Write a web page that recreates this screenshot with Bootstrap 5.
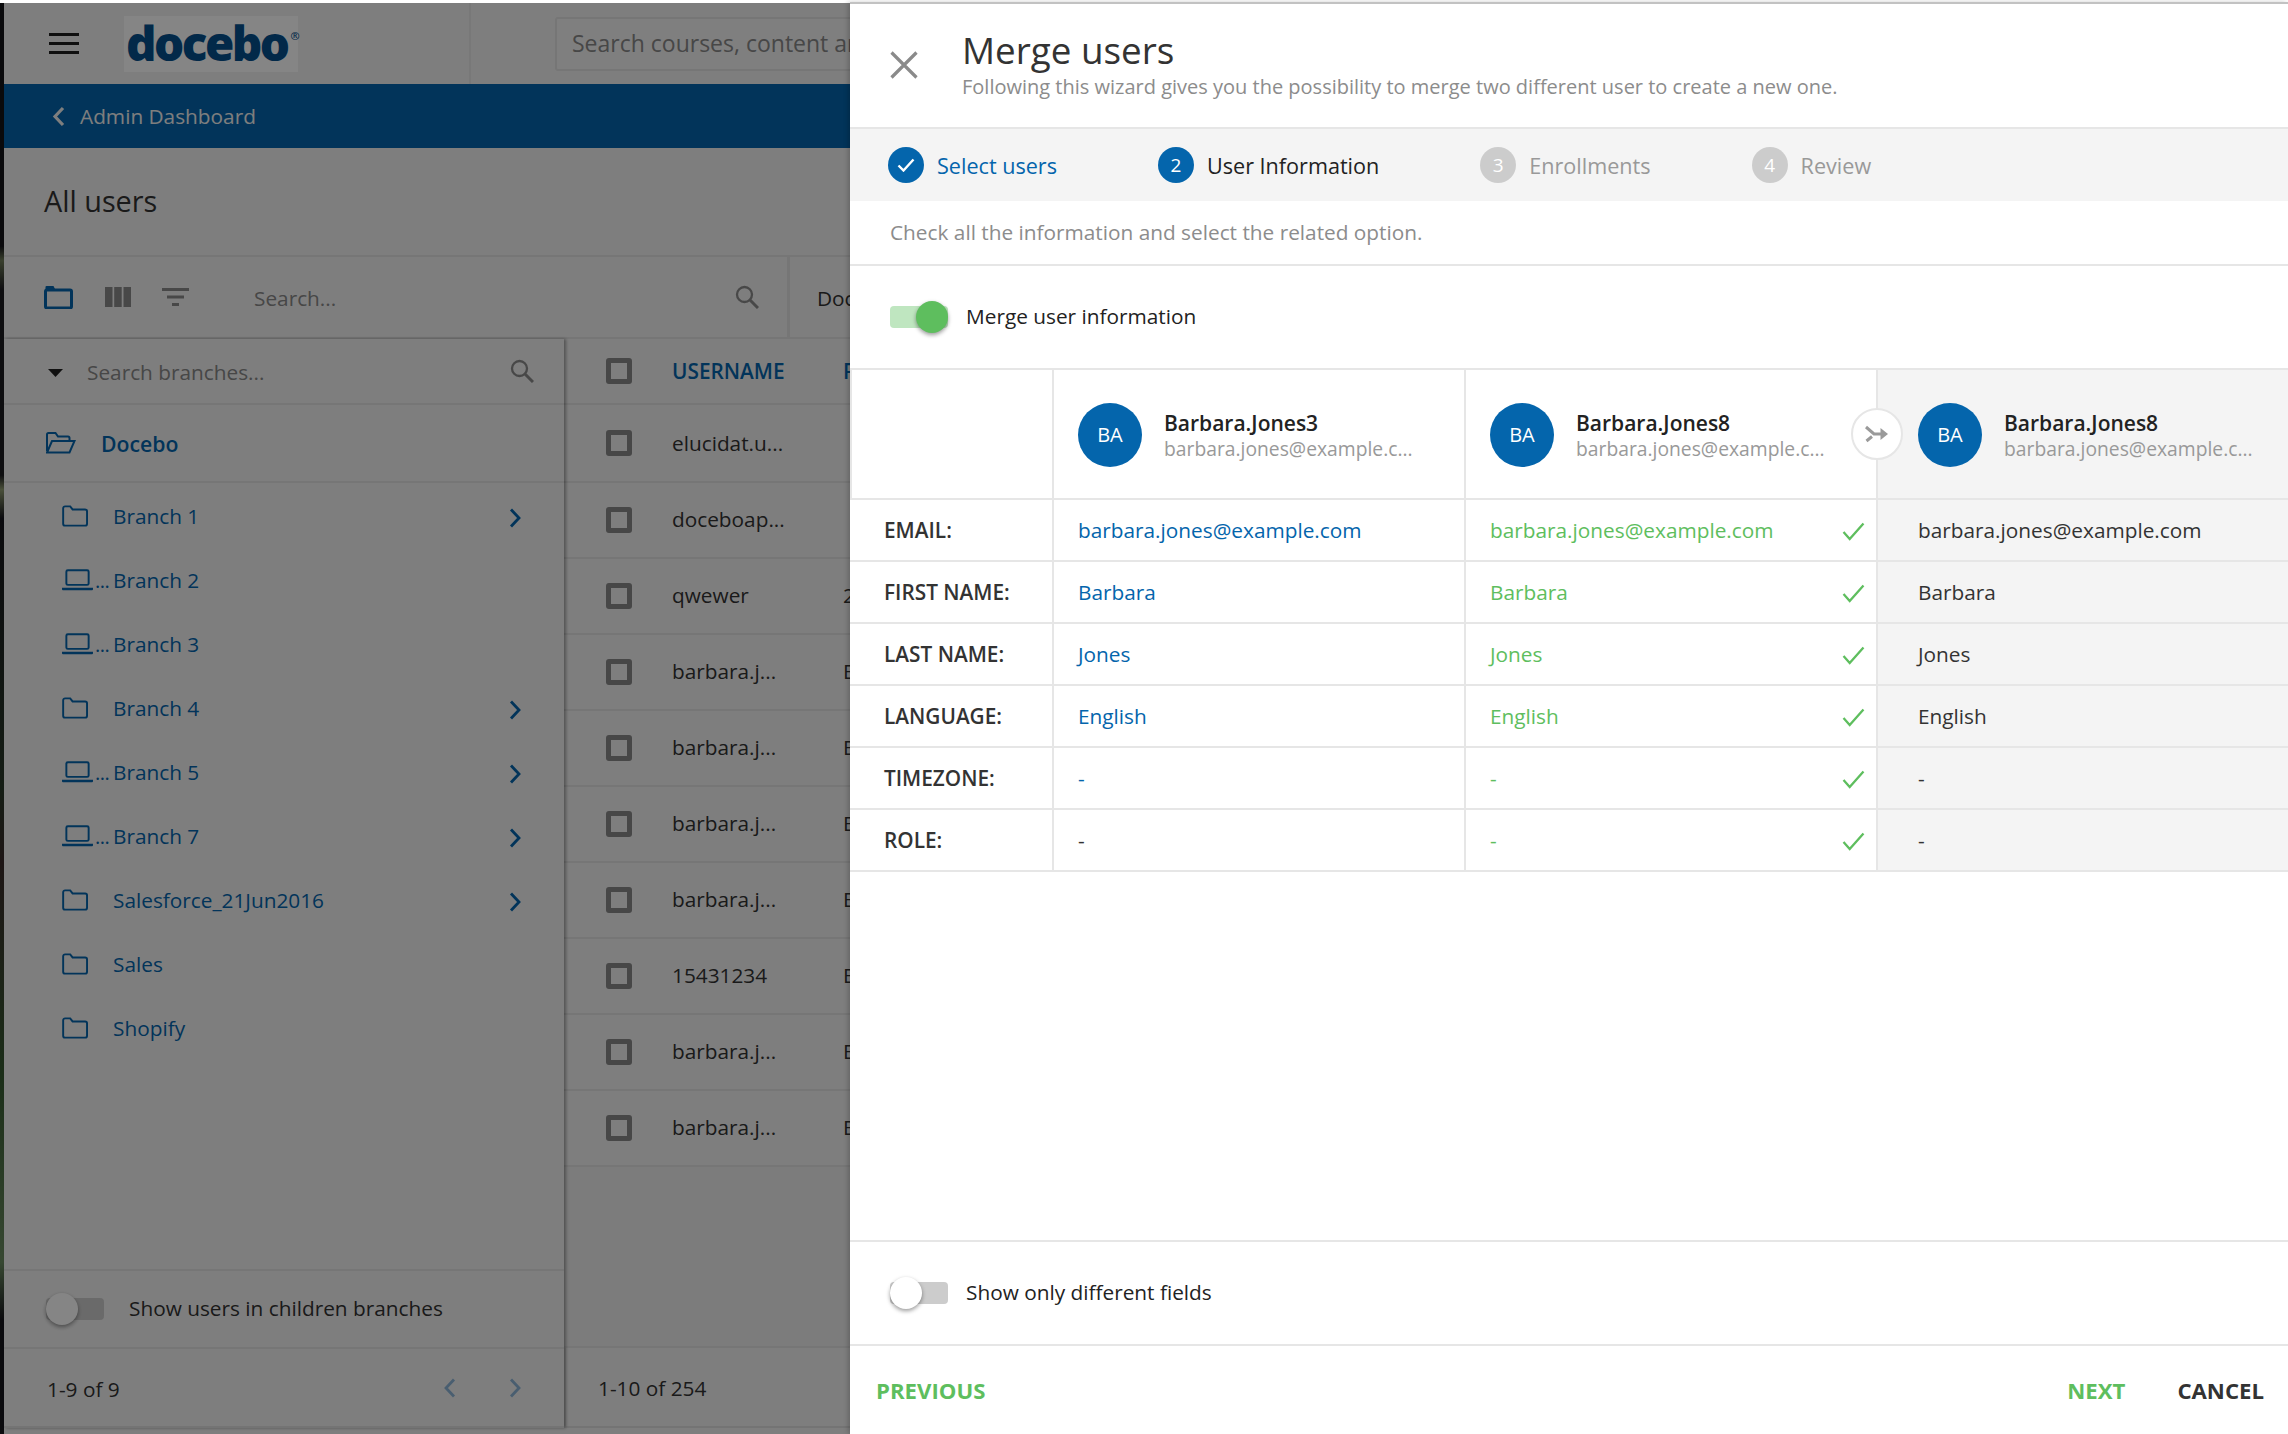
<!DOCTYPE html>
<html lang="en">
<head>
<meta charset="utf-8">
<title>Merge users</title>
<link href="https://cdn.jsdelivr.net/npm/bootstrap@5.3.0/dist/css/bootstrap.min.css" rel="stylesheet">
<style>
html,body{margin:0;height:100%;overflow:hidden}
body{width:2288px;height:1434px;background:#16161c;font-family:"Open Sans","Liberation Sans",sans-serif;font-size:20.8px;color:#333;line-height:1.3}
.strip-top{height:3px;background:#fff}
.stage{height:1431px}
.strip-left{width:4px;flex:none;background:linear-gradient(180deg,#141418 0,#141418 17%,#6e7a58 18%,#1c1c20 20%,#1c1c20 33%,#8e9a70 34%,#16161c 36%,#2a3a2a 55%,#3a2a2a 60%,#355a30 75%,#6a8a60 88%,#16161c 92%)}
.app{flex:1;background:#f2f2f2;min-width:0}
.app-head{height:81px;background:#f2f2f2}
.burger{width:84px;padding-left:45px}
.logo-box{width:174px;height:56px;background:#fff;margin-left:36px;font-weight:800;font-size:47.500px;letter-spacing:-2.500px;line-height:54px;padding-left:2px;white-space:nowrap;color:#05508d}
.logo-box sup{font-size:11px;letter-spacing:0;font-weight:600;top:-1.9em;margin-left:3px}
.head-div{width:2px;height:81px;background:#e6e6e6;margin-left:171px}
.head-search{width:600px;height:54px;margin-left:84px;border:2px solid #e2e2e2;border-radius:3px;padding-left:15px;color:#888;font-size:23px;background:#f4f4f4;white-space:nowrap;overflow:hidden}
.blue-bar{height:64px;background:#0465ac;color:#f2f2f2;padding-left:48px;gap:15px;font-size:20.800px}
.blue-bar span{padding-top:2px}
.title-bar{height:109px;border-bottom:2px solid #e2e2e2;padding-left:40px;font-size:28.800px;color:#333;padding-bottom:2px}
.tool-bar{height:82px;border-bottom:2px solid #e2e2e2}
.tool-left{width:786px;border-right:3px solid #e2e2e2;height:100%;padding-left:40px;padding-right:28px}
.tb-col{margin-left:32px}
.tb-filter{margin-left:31px}
.tool-search{color:#888;margin-left:65px;padding-top:3px}
.tool-doc{margin-left:27px;padding-top:3px}
.main-body{height:1089px}
.side{width:560px;flex:none;box-shadow:2px 0 3px rgba(0,0,0,.35);z-index:1;position:relative}
.side-search{height:66px;border-bottom:2px solid #e2e2e2;padding:0 30px 0 44px;color:#888}
.side-search span{margin-left:24px;padding-top:4px}
.side-caret{margin-top:4px}
.side-root{height:78px;border-bottom:2px solid #e2e2e2;padding-left:42px;color:#0465ac;font-weight:600;font-size:21.200px;gap:25px}
.side-root span{padding-top:2px}
.branches{flex:1;padding-top:2px}
.branch{height:64px;color:#0465ac;padding-left:58px;padding-right:43px}
.branch-icon{width:51px;flex:none;color:#0465ac;font-size:20px;letter-spacing:-.5px;margin-bottom:3px;line-height:1}
.branch-icon span{margin-left:2px}
.branch-arrow{color:#0465ac;margin-top:2px}
.side-switch{height:80px;border-top:2px solid #e2e2e2;border-bottom:2px solid #e2e2e2;padding-left:42px;gap:25px}
.side-pager{height:79px;padding:0 43px 0 43px;border-bottom:2px solid #dedede}
.side-pager>span{padding-top:5px}
.pg-arrow{color:#8db4d6}
.pg-next{margin-left:53px}
.tbl{flex:1;background:#ededed;min-width:0;overflow:hidden}
.tbl-head{height:66px;background:#f2f2f2;border-bottom:2px solid #e2e2e2;padding-left:42px;color:#0465ac;font-weight:600}
.tbl-head span{padding-top:2px}
.tbl-row{height:76px;background:#f2f2f2;border-bottom:2px solid #e2e2e2;padding-left:42px;white-space:nowrap}
.tbl-row-top{height:77.500px}
.tbl-row span{padding-top:1px}
.tbl-name{width:171px;flex:none;margin-left:40px}
.chk{width:26px;height:26px;border:5px solid #888;border-radius:3px;flex:none;background:transparent}
.tbl-fill{flex:1}
.tbl-foot{height:82px;border-top:2px solid #e2e2e2;border-bottom:2px solid #dedede;background:#f2f2f2;padding-left:32px;border-left:2px solid #e2e2e2;padding-top:4px}
.veil{position:absolute;inset:0;background:rgba(0,0,0,.48);z-index:10}
.drawer{position:absolute;left:850px;width:1438px;top:-1px;bottom:0;background:#fff;z-index:20;border-top:2px solid #c2c2c2;box-shadow:-2px 0 5px rgba(0,0,0,.2)}
.dr-head{height:125px;border-bottom:2px solid #e6e6e6;padding-left:40px}
.dr-close{width:72px;flex:none;margin-top:-2px}
.dr-title{font-size:36.800px;line-height:44px;color:#333;margin-top:-5px}
.dr-sub{font-size:20px;line-height:24px;color:#8c8c8c;font-weight:500;margin-top:3px}
.steps{height:72px;background:#f4f4f4;padding-left:38px;gap:101px;font-weight:500;font-size:21.600px}
.step{gap:13px;white-space:nowrap}
.step>span{padding-top:2px}
.step-dot{width:36px;height:36px;border-radius:50%;background:#0465ac;color:#fff;font-size:19px;font-weight:400}
.step-off .step-dot{background:#ccc}
.step-off{color:#999}
.step-done{color:#0465ac}
.step-now{color:#222}
.hint{height:65px;border-bottom:2px solid #e6e6e6;padding-left:40px;color:#8c8c8c}
.merge-opt{height:104px;border-bottom:2px solid #e6e6e6;padding-left:40px;gap:18px;color:#222}
.sw{width:58px;height:32px;flex:none;position:relative}
.sw::before{content:"";position:absolute;left:0;right:0;top:5px;height:22px;border-radius:4px;background:#ccc}
.sw::after{content:"";position:absolute;top:0;width:32px;height:32px;border-radius:50%;background:#fff;left:0;box-shadow:0 2px 4px rgba(0,0,0,.4)}
.sw-on::before{background:#bfe6c0}
.sw-on::after{background:#5ebe5e;left:26px}
.tr{height:62px;border-bottom:2px solid #e6e6e6;align-items:stretch}
.tr-head{height:130px}
.td{display:flex;align-items:center;position:relative;min-width:0;padding-top:2px}
.tr-head .td{padding-top:0}
.td-l{width:204px;flex:none;padding-left:34px;font-weight:600;color:#333;border-right:2px solid #e6e6e6}
.td-a,.td-b{width:412px;flex:none;padding-left:24px;border-right:2px solid #e6e6e6}
.td-a{color:#0465ac}
.td-a-plain{color:#333}
.td-b{color:#5ebe5e;justify-content:space-between;padding-right:11px}
.td-c{flex:1;background:#f4f4f4;padding-left:40px;color:#333}
.tr-head .td-a,.tr-head .td-b,.tr-head .td-c{color:#333;justify-content:flex-start}
.tr-head .td-l{border-left:2px solid #e6e6e6}
.ava{width:64px;height:64px;border-radius:50%;background:#0465ac;color:#fff;flex:none;font-size:20px;margin-right:22px;margin-top:1px}
.who{padding-top:3px}
.who-n{font-weight:600;color:#222;line-height:26px;font-size:21px}
.who-m{font-size:19.300px;color:#999;line-height:26px;white-space:nowrap}
.merge-dot{position:absolute;right:-27px;top:38px;width:52px;height:52px;border-radius:50%;background:#fff;border:2px solid #e6e6e6;z-index:2}
.dr-spacer{flex:1}
.dr-opt{height:104px;border-top:2px solid #e6e6e6;padding-left:40px;gap:18px;color:#222}
.dr-foot{height:90px;border-top:2px solid #e6e6e6;padding:3px 24px 0 26px;font-weight:700;font-size:22.200px}
.act-g{color:#5ebe5e}
.act-k{color:#333;margin-left:52px}
svg{display:block;flex:none}
.sprites{position:absolute}
</style>
</head>
<body>
<svg class="sprites" width="0" height="0">
  <symbol id="i-folder" viewBox="0 0 27 22"><path d="M1.200 3a2 2 0 0 1 2-2h5.300l2.500 3.200h13a2 2 0 0 1 2 2V19a2 2 0 0 1-2 2H3.200a2 2 0 0 1-2-2z" fill="none" stroke="currentColor" stroke-width="2"/></symbol>
  <symbol id="i-laptop" viewBox="0 0 32 22"><rect x="4.500" y="1" width="23" height="15" rx="1.500" fill="none" stroke="currentColor" stroke-width="2"/><path d="M0 19h32v1.500a1 1 0 0 1-1 1H1a1 1 0 0 1-1-1z" fill="currentColor"/></symbol>
  <symbol id="i-right" viewBox="0 0 12 20"><path d="M2 1.500 10 10l-8 8.500" fill="none" stroke="currentColor" stroke-width="2.800"/></symbol>
  <symbol id="i-left" viewBox="0 0 12 20"><path d="M10 1.500 2 10l8 8.500" fill="none" stroke="currentColor" stroke-width="2.800"/></symbol>
  <symbol id="i-search" viewBox="0 0 24 24"><circle cx="9.500" cy="9.500" r="7.500" fill="none" stroke="currentColor" stroke-width="2.300"/><path d="m15 15 8 8" stroke="currentColor" stroke-width="3"/></symbol>
  <symbol id="i-check" viewBox="0 0 24 20"><path d="M1.500 10.500 8 18 22.500 1.500" fill="none" stroke="currentColor" stroke-width="2.400"/></symbol>
</svg>

<div class="strip-top"></div>
<div class="stage d-flex position-relative">
  <div class="strip-left"></div>
  <div class="app d-flex flex-column">
    <div class="app-head d-flex align-items-center">
      <div class="burger">
        <svg width="30" height="21" viewBox="0 0 30 21"><path d="M0 1.500h30M0 10.500h30M0 19.500h30" stroke="#1f1f1f" stroke-width="3"/></svg>
      </div>
      <div class="logo-box">docebo<sup>®</sup></div>
      <div class="head-div"></div>
      <div class="head-search d-flex align-items-center">Search courses, content and more</div>
    </div>
    <div class="blue-bar d-flex align-items-center">
      <svg width="13" height="21" viewBox="0 0 13 21"><path d="M11 2 3 10.500 11 19" fill="none" stroke="#f2f2f2" stroke-width="3.200"/></svg>
      <span>Admin Dashboard</span>
    </div>
    <div class="title-bar d-flex align-items-center">All users</div>
    <div class="tool-bar d-flex align-items-center">
      <div class="tool-left d-flex align-items-center">
        <svg width="29" height="24" viewBox="0 0 29 24"><path d="M1.500 5V2a1 1 0 0 1 1-1h7l2 4z" fill="#0465ac"/><rect x="1.500" y="5" width="26" height="18" rx="1.500" fill="none" stroke="#0465ac" stroke-width="3"/></svg>
        <svg class="tb-col" width="26" height="20" viewBox="0 0 26 20" fill="#8a8a8a"><rect width="7.500" height="20"/><rect x="9.200" width="7.500" height="20"/><rect x="18.500" width="7.500" height="20"/></svg>
        <svg class="tb-filter" width="27" height="18" viewBox="0 0 27 18"><path d="M0 1.500h27M5 9h17M10 16.500h7" stroke="#8a8a8a" stroke-width="3"/></svg>
        <span class="tool-search flex-grow-1">Search...</span>
        <svg width="24" height="24" color="#8a8a8a"><use href="#i-search"/></svg>
      </div>
      <span class="tool-doc">Docebo</span>
    </div>
    <div class="main-body d-flex">
      <div class="side d-flex flex-column">
        <div class="side-search d-flex align-items-center">
          <svg class="side-caret" width="15" height="8" viewBox="0 0 15 8"><path d="M0 0h15L7.500 8z" fill="#222"/></svg>
          <span class="flex-grow-1">Search branches...</span>
          <svg width="24" height="24" color="#8a8a8a"><use href="#i-search"/></svg>
        </div>
        <div class="side-root d-flex align-items-center">
          <svg width="30" height="22" viewBox="0 0 30 22"><path d="M1 19V2.500a1.500 1.500 0 0 1 1.500-1.500h7l2.500 3.500h10a1.500 1.500 0 0 1 1.500 1.500v3M1 20.500 6 9h22.500l-5 11.500z" fill="none" stroke="currentColor" stroke-width="2"/></svg>
          <span>Docebo</span>
        </div>
        <div class="branches">
          <div class="branch d-flex align-items-center"><div class="branch-icon"><svg width="26" height="22"><use href="#i-folder"/></svg></div><span class="flex-grow-1">Branch 1</span><svg class="branch-arrow" width="12" height="20"><use href="#i-right"/></svg></div>
          <div class="branch d-flex align-items-center"><div class="branch-icon d-flex align-items-end"><svg width="31" height="22"><use href="#i-laptop"/></svg><span>...</span></div><span class="flex-grow-1">Branch 2</span></div>
          <div class="branch d-flex align-items-center"><div class="branch-icon d-flex align-items-end"><svg width="31" height="22"><use href="#i-laptop"/></svg><span>...</span></div><span class="flex-grow-1">Branch 3</span></div>
          <div class="branch d-flex align-items-center"><div class="branch-icon"><svg width="26" height="22"><use href="#i-folder"/></svg></div><span class="flex-grow-1">Branch 4</span><svg class="branch-arrow" width="12" height="20"><use href="#i-right"/></svg></div>
          <div class="branch d-flex align-items-center"><div class="branch-icon d-flex align-items-end"><svg width="31" height="22"><use href="#i-laptop"/></svg><span>...</span></div><span class="flex-grow-1">Branch 5</span><svg class="branch-arrow" width="12" height="20"><use href="#i-right"/></svg></div>
          <div class="branch d-flex align-items-center"><div class="branch-icon d-flex align-items-end"><svg width="31" height="22"><use href="#i-laptop"/></svg><span>...</span></div><span class="flex-grow-1">Branch 7</span><svg class="branch-arrow" width="12" height="20"><use href="#i-right"/></svg></div>
          <div class="branch d-flex align-items-center"><div class="branch-icon"><svg width="26" height="22"><use href="#i-folder"/></svg></div><span class="flex-grow-1">Salesforce_21Jun2016</span><svg class="branch-arrow" width="12" height="20"><use href="#i-right"/></svg></div>
          <div class="branch d-flex align-items-center"><div class="branch-icon"><svg width="26" height="22"><use href="#i-folder"/></svg></div><span class="flex-grow-1">Sales</span></div>
          <div class="branch d-flex align-items-center"><div class="branch-icon"><svg width="26" height="22"><use href="#i-folder"/></svg></div><span class="flex-grow-1">Shopify</span></div>
        </div>
        <div class="side-switch d-flex align-items-center"><div class="sw"></div><span>Show users in children branches</span></div>
        <div class="side-pager d-flex align-items-center">
          <span class="flex-grow-1">1-9 of 9</span>
          <svg class="pg-arrow" width="12" height="20"><use href="#i-left"/></svg>
          <svg class="pg-arrow pg-next" width="12" height="20"><use href="#i-right"/></svg>
        </div>
      </div>
      <div class="tbl d-flex flex-column">
        <div class="tbl-head d-flex align-items-center"><div class="chk"></div><span class="tbl-name">USERNAME</span><span>FIRST NAME</span></div>
        <div class="tbl-row tbl-row-top d-flex align-items-center"><div class="chk"></div><span class="tbl-name">elucidat.u...</span></div>
        <div class="tbl-row d-flex align-items-center"><div class="chk"></div><span class="tbl-name">doceboap...</span></div>
        <div class="tbl-row d-flex align-items-center"><div class="chk"></div><span class="tbl-name">qwewer</span><span>2</span></div>
        <div class="tbl-row d-flex align-items-center"><div class="chk"></div><span class="tbl-name">barbara.j...</span><span>Barbara</span></div>
        <div class="tbl-row d-flex align-items-center"><div class="chk"></div><span class="tbl-name">barbara.j...</span><span>Barbara</span></div>
        <div class="tbl-row d-flex align-items-center"><div class="chk"></div><span class="tbl-name">barbara.j...</span><span>Barbara</span></div>
        <div class="tbl-row d-flex align-items-center"><div class="chk"></div><span class="tbl-name">barbara.j...</span><span>Barbara</span></div>
        <div class="tbl-row d-flex align-items-center"><div class="chk"></div><span class="tbl-name">15431234</span><span>Barbara</span></div>
        <div class="tbl-row d-flex align-items-center"><div class="chk"></div><span class="tbl-name">barbara.j...</span><span>Barbara</span></div>
        <div class="tbl-row d-flex align-items-center"><div class="chk"></div><span class="tbl-name">barbara.j...</span><span>Barbara</span></div>
        <div class="tbl-fill"></div>
        <div class="tbl-foot d-flex align-items-center">1-10 of 254</div>
      </div>
    </div>
  </div>

  <div class="veil"></div>

  <div class="drawer d-flex flex-column">
    <div class="dr-head d-flex align-items-center">
      <div class="dr-close"><svg width="28" height="28" viewBox="0 0 28 28"><path d="M1.500 1.500l25 25M26.500 1.500l-25 25" stroke="#8a8a8a" stroke-width="3.200"/></svg></div>
      <div>
        <div class="dr-title">Merge users</div>
        <div class="dr-sub">Following this wizard gives you the possibility to merge two different user to create a new one.</div>
      </div>
    </div>
    <div class="steps d-flex align-items-center">
      <div class="step step-done d-flex align-items-center"><div class="step-dot d-flex align-items-center justify-content-center"><svg width="18" height="14" viewBox="0 0 18 14"><path d="M1.500 7.500 6.500 12.500 16.500 1.500" fill="none" stroke="#fff" stroke-width="2.400"/></svg></div><span>Select users</span></div>
      <div class="step step-now d-flex align-items-center"><div class="step-dot d-flex align-items-center justify-content-center">2</div><span>User Information</span></div>
      <div class="step step-off d-flex align-items-center"><div class="step-dot d-flex align-items-center justify-content-center">3</div><span>Enrollments</span></div>
      <div class="step step-off d-flex align-items-center"><div class="step-dot d-flex align-items-center justify-content-center">4</div><span>Review</span></div>
    </div>
    <div class="hint d-flex align-items-center">Check all the information and select the related option.</div>
    <div class="merge-opt d-flex align-items-center"><div class="sw sw-on"></div><span>Merge user information</span></div>

    <div class="tr tr-head d-flex">
      <div class="td td-l"></div>
      <div class="td td-a"><div class="ava d-flex align-items-center justify-content-center">BA</div><div class="who"><div class="who-n">Barbara.Jones3</div><div class="who-m">barbara.jones@example.c...</div></div></div>
      <div class="td td-b"><div class="ava d-flex align-items-center justify-content-center">BA</div><div class="who flex-grow-1"><div class="who-n">Barbara.Jones8</div><div class="who-m">barbara.jones@example.c...</div></div>
        <div class="merge-dot d-flex align-items-center justify-content-center"><svg width="24" height="18" viewBox="0 0 24 18"><path d="M1 2 9 9h10M1.500 16 7 11.500" fill="none" stroke="#9a9a9a" stroke-width="3"/><path d="M15.500 3 23 9l-7.500 6z" fill="#9a9a9a"/></svg></div>
      </div>
      <div class="td td-c"><div class="ava d-flex align-items-center justify-content-center">BA</div><div class="who"><div class="who-n">Barbara.Jones8</div><div class="who-m">barbara.jones@example.c...</div></div></div>
    </div>
    <div class="tr d-flex"><div class="td td-l">EMAIL:</div><div class="td td-a">barbara.jones@example.com</div><div class="td td-b"><span>barbara.jones@example.com</span><svg width="23" height="19"><use href="#i-check"/></svg></div><div class="td td-c">barbara.jones@example.com</div></div>
    <div class="tr d-flex"><div class="td td-l">FIRST NAME:</div><div class="td td-a">Barbara</div><div class="td td-b"><span>Barbara</span><svg width="23" height="19"><use href="#i-check"/></svg></div><div class="td td-c">Barbara</div></div>
    <div class="tr d-flex"><div class="td td-l">LAST NAME:</div><div class="td td-a">Jones</div><div class="td td-b"><span>Jones</span><svg width="23" height="19"><use href="#i-check"/></svg></div><div class="td td-c">Jones</div></div>
    <div class="tr d-flex"><div class="td td-l">LANGUAGE:</div><div class="td td-a">English</div><div class="td td-b"><span>English</span><svg width="23" height="19"><use href="#i-check"/></svg></div><div class="td td-c">English</div></div>
    <div class="tr d-flex"><div class="td td-l">TIMEZONE:</div><div class="td td-a">-</div><div class="td td-b"><span>-</span><svg width="23" height="19"><use href="#i-check"/></svg></div><div class="td td-c">-</div></div>
    <div class="tr d-flex"><div class="td td-l">ROLE:</div><div class="td td-a td-a-plain">-</div><div class="td td-b"><span>-</span><svg width="23" height="19"><use href="#i-check"/></svg></div><div class="td td-c">-</div></div>

    <div class="dr-spacer"></div>
    <div class="dr-opt d-flex align-items-center"><div class="sw"></div><span>Show only different fields</span></div>
    <div class="dr-foot d-flex align-items-center">
      <span class="act-g flex-grow-1">PREVIOUS</span>
      <span class="act-g">NEXT</span>
      <span class="act-k">CANCEL</span>
    </div>
  </div>
</div>
<script src="https://cdn.jsdelivr.net/npm/bootstrap@5.3.0/dist/js/bootstrap.bundle.min.js"></script>
</body>
</html>
